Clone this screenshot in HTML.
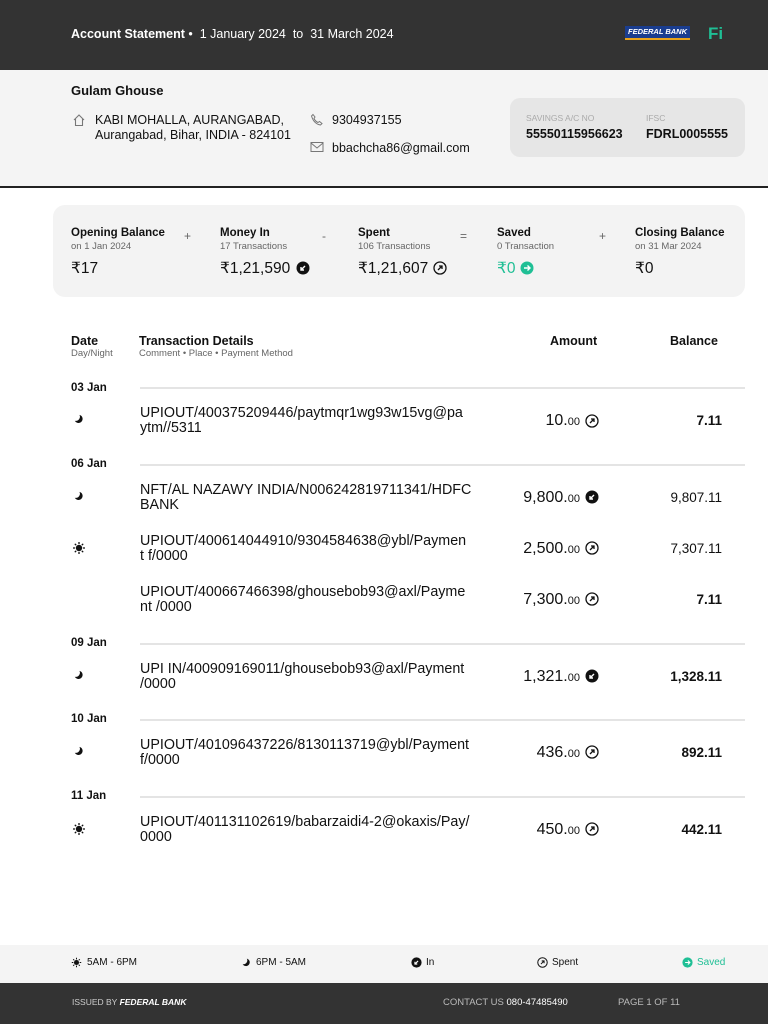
<!DOCTYPE html>
<html><head><meta charset="utf-8"><style>
*{margin:0;padding:0;box-sizing:border-box}
body{width:768px;height:1024px;position:relative;background:#fff;font-family:"Liberation Sans",sans-serif;color:#111;overflow:hidden}
.a{position:absolute;white-space:nowrap}
.b{font-weight:bold}
.s{font-size:10px;color:#666}
.tx{font-size:14.3px;line-height:15px;white-space:normal;width:360px}
.amt{font-size:16px;text-align:right;width:120px}
.amt small{font-size:11px}
.bal{font-size:13.5px;text-align:right;width:100px}
.hr{position:absolute;left:140px;width:605px;height:2px;background:#e4e4e4}
.dt{font-size:11.5px;font-weight:bold}
</style></head><body>
<svg width="0" height="0" style="position:absolute">
<defs>
<symbol id="sp" viewBox="0 0 14 14"><circle cx="7" cy="7" r="6" fill="none" stroke="#111" stroke-width="1.3"/><path d="M5 9L9 5M6 5H9V8" fill="none" stroke="#111" stroke-width="1.3"/></symbol>
<symbol id="in" viewBox="0 0 14 14"><circle cx="7" cy="7" r="6.5" fill="#111"/><path d="M9 5L5 9M5 6V9H8" fill="none" stroke="#fff" stroke-width="1.4"/></symbol>
<symbol id="sv" viewBox="0 0 14 14"><circle cx="7" cy="7" r="6.5" fill="#1fbf95"/><path d="M4 7H10M7.5 4.5L10 7L7.5 9.5" fill="none" stroke="#fff" stroke-width="1.4"/></symbol>
<symbol id="mn" viewBox="0 0 12 12"><path d="M7 2A4.5 4.5 0 1 1 2 8.5A4.5 4.5 0 0 0 7 2Z" fill="#111"/></symbol>
<symbol id="sn" viewBox="0 0 14 14"><circle cx="7" cy="7" r="3.2" fill="#111"/><path d="M7 1V3M7 11V13M1 7H3M11 7H13M2.8 2.8L4.2 4.2M9.8 9.8L11.2 11.2M2.8 11.2L4.2 9.8M9.8 4.2L11.2 2.8" stroke="#111" stroke-width="1.3"/></symbol>
</defs></svg>
<div class="a" style="left:0;top:0;width:768px;height:70px;background:#333"></div>
<div class="a" style="left:71px;top:27px;color:#fff;font-size:12.5px"><b>Account Statement</b> • &nbsp;1 January 2024 &nbsp;to &nbsp;31 March 2024</div>
<div class="a" style="left:625px;top:26px;width:65px;height:14px;background:#1a3d8f;border-bottom:2px solid #e8a21a;color:#fff;font-size:7.5px;font-style:italic;font-weight:bold;text-align:center;line-height:12px">FEDERAL BANK</div>
<div class="a" style="left:708px;top:24px;color:#1fbf95;font-size:17px;font-weight:bold">Fi</div>

<div class="a" style="left:0;top:70px;width:768px;height:117px;background:#f4f4f4"></div>
<div class="a" style="left:0;top:186px;width:768px;height:2px;background:#222"></div>
<div class="a b" style="left:71px;top:83px;font-size:13px">Gulam Ghouse</div>
<svg class="a" style="left:72px;top:113px" width="14" height="14" viewBox="0 0 14 14"><path d="M2 7L7 2L12 7M3.5 6V12.5H10.5V6" fill="none" stroke="#777" stroke-width="1.1"/></svg>
<div class="a" style="left:95px;top:113px;font-size:12.5px;line-height:15px">KABI MOHALLA, AURANGABAD,<br>Aurangabad, Bihar, INDIA - 824101</div>
<svg class="a" style="left:310px;top:113px" width="13" height="13" viewBox="0 0 13 13"><path d="M3 1.5L5 4L4 5.5Q5.5 8.5 8 9.5L9.5 8.5L12 10.5L10.5 12Q4 11 1.5 3Z" fill="none" stroke="#777" stroke-width="1"/></svg>
<div class="a" style="left:332px;top:113px;font-size:12.5px">9304937155</div>
<svg class="a" style="left:310px;top:141px" width="14" height="12" viewBox="0 0 14 12"><rect x="1" y="1.5" width="12" height="9" fill="none" stroke="#777"/><path d="M1 2L7 7L13 2" fill="none" stroke="#777"/></svg>
<div class="a" style="left:332px;top:141px;font-size:12.5px">bbachcha86@gmail.com</div>
<div class="a" style="left:510px;top:98px;width:235px;height:59px;background:#e6e6e6;border-radius:10px"></div>
<div class="a" style="left:526px;top:113px;font-size:8.5px;color:#aaa">SAVINGS A/C NO</div>
<div class="a b" style="left:526px;top:127px;font-size:12.5px">55550115956623</div>
<div class="a" style="left:646px;top:113px;font-size:8.5px;color:#aaa">IFSC</div>
<div class="a b" style="left:646px;top:127px;font-size:12.5px">FDRL0005555</div>

<div class="a" style="left:53px;top:205px;width:692px;height:92px;background:#f3f3f3;border-radius:12px"></div>
<div class="a b" style="left:71px;top:227px;font-size:11.5px">Opening Balance</div><div class="a s" style="left:71px;top:241px;font-size:9.5px">on 1 Jan 2024</div><div class="a" style="left:71px;top:259px;font-size:15.5px">₹17</div>
<div class="a" style="left:184px;top:229px;font-size:12px;color:#666">+</div>
<div class="a b" style="left:220px;top:227px;font-size:11.5px">Money In</div><div class="a s" style="left:220px;top:241px;font-size:9.5px">17 Transactions</div><div class="a" style="left:220px;top:259px;font-size:15.5px">₹1,21,590</div><svg class="a" style="left:296px;top:261px" width="14" height="14"><use href="#in"/></svg>
<div class="a" style="left:322px;top:229px;font-size:12px;color:#666">-</div>
<div class="a b" style="left:358px;top:227px;font-size:11.5px">Spent</div><div class="a s" style="left:358px;top:241px;font-size:9.5px">106 Transactions</div><div class="a" style="left:358px;top:259px;font-size:15.5px">₹1,21,607</div><svg class="a" style="left:433px;top:261px" width="14" height="14"><use href="#sp"/></svg>
<div class="a" style="left:460px;top:229px;font-size:12px;color:#666">=</div>
<div class="a b" style="left:497px;top:227px;font-size:11.5px">Saved</div><div class="a s" style="left:497px;top:241px;font-size:9.5px">0 Transaction</div><div class="a" style="left:497px;top:259px;font-size:15.5px;color:#1fbf95">₹0</div><svg class="a" style="left:520px;top:261px" width="14" height="14"><use href="#sv"/></svg>
<div class="a" style="left:599px;top:229px;font-size:12px;color:#666">+</div>
<div class="a b" style="left:635px;top:227px;font-size:11.5px">Closing Balance</div><div class="a s" style="left:635px;top:241px;font-size:9.5px">on 31 Mar 2024</div><div class="a" style="left:635px;top:259px;font-size:15.5px">₹0</div>

<div class="a b" style="left:71px;top:334px;font-size:12.5px">Date</div><div class="a s" style="left:71px;top:348px;font-size:9.5px">Day/Night</div>
<div class="a b" style="left:139px;top:334px;font-size:12.5px">Transaction Details</div><div class="a s" style="left:139px;top:348px;font-size:9.5px">Comment • Place • Payment Method</div>
<div class="a b" style="left:550px;top:334px;font-size:12.5px">Amount</div>
<div class="a b" style="left:670px;top:334px;font-size:12.5px">Balance</div>

<div class="a dt" style="left:71px;top:382px">03 Jan</div><div class="hr" style="top:387px"></div>
<div class="a dt" style="left:71px;top:458px">06 Jan</div><div class="hr" style="top:464px"></div>
<div class="a dt" style="left:71px;top:637px">09 Jan</div><div class="hr" style="top:643px"></div>
<div class="a dt" style="left:71px;top:713px">10 Jan</div><div class="hr" style="top:719px"></div>
<div class="a dt" style="left:71px;top:790px">11 Jan</div><div class="hr" style="top:796px"></div>

<svg class="a" style="left:73px;top:413px" width="11" height="11"><use href="#mn"/></svg>
<div class="a tx" style="left:140px;top:406px">UPIOUT/400375209446/paytmqr1wg93w15vg@pa<br>ytm//5311</div>
<div class="a amt" style="left:460px;top:412px">10.<small>00</small></div><svg class="a" style="left:585px;top:414px" width="14" height="14"><use href="#sp"/></svg>
<div class="a bal b" style="left:622px;top:413px">7.11</div>

<svg class="a" style="left:73px;top:490px" width="11" height="11"><use href="#mn"/></svg>
<div class="a tx" style="left:140px;top:483px">NFT/AL NAZAWY INDIA/N006242819711341/HDFC<br>BANK</div>
<div class="a amt" style="left:460px;top:489px">9,800.<small>00</small></div><svg class="a" style="left:585px;top:490px" width="14" height="14"><use href="#in"/></svg>
<div class="a bal" style="left:622px;top:490px">9,807.11</div>

<svg class="a" style="left:72px;top:541px" width="14" height="14"><use href="#sn"/></svg>
<div class="a tx" style="left:140px;top:534px">UPIOUT/400614044910/9304584638@ybl/Paymen<br>t f/0000</div>
<div class="a amt" style="left:460px;top:540px">2,500.<small>00</small></div><svg class="a" style="left:585px;top:541px" width="14" height="14"><use href="#sp"/></svg>
<div class="a bal" style="left:622px;top:541px">7,307.11</div>

<div class="a tx" style="left:140px;top:585px">UPIOUT/400667466398/ghousebob93@axl/Payme<br>nt /0000</div>
<div class="a amt" style="left:460px;top:591px">7,300.<small>00</small></div><svg class="a" style="left:585px;top:592px" width="14" height="14"><use href="#sp"/></svg>
<div class="a bal b" style="left:622px;top:592px">7.11</div>

<svg class="a" style="left:73px;top:669px" width="11" height="11"><use href="#mn"/></svg>
<div class="a tx" style="left:140px;top:662px">UPI IN/400909169011/ghousebob93@axl/Payment<br>/0000</div>
<div class="a amt" style="left:460px;top:668px">1,321.<small>00</small></div><svg class="a" style="left:585px;top:669px" width="14" height="14"><use href="#in"/></svg>
<div class="a bal b" style="left:622px;top:669px">1,328.11</div>

<svg class="a" style="left:73px;top:745px" width="11" height="11"><use href="#mn"/></svg>
<div class="a tx" style="left:140px;top:738px">UPIOUT/401096437226/8130113719@ybl/Payment<br>f/0000</div>
<div class="a amt" style="left:460px;top:744px">436.<small>00</small></div><svg class="a" style="left:585px;top:745px" width="14" height="14"><use href="#sp"/></svg>
<div class="a bal b" style="left:622px;top:745px">892.11</div>

<svg class="a" style="left:72px;top:822px" width="14" height="14"><use href="#sn"/></svg>
<div class="a tx" style="left:140px;top:815px">UPIOUT/401131102619/babarzaidi4-2@okaxis/Pay/<br>0000</div>
<div class="a amt" style="left:460px;top:821px">450.<small>00</small></div><svg class="a" style="left:585px;top:822px" width="14" height="14"><use href="#sp"/></svg>
<div class="a bal b" style="left:622px;top:822px">442.11</div>

<div class="a" style="left:0;top:945px;width:768px;height:38px;background:#f4f4f4"></div>
<svg class="a" style="left:71px;top:957px" width="11" height="11"><use href="#sn"/></svg><div class="a" style="left:87px;top:957px;font-size:10px">5AM - 6PM</div>
<svg class="a" style="left:241px;top:957px" width="10" height="10"><use href="#mn"/></svg><div class="a" style="left:256px;top:957px;font-size:10px">6PM - 5AM</div>
<svg class="a" style="left:411px;top:957px" width="11" height="11"><use href="#in"/></svg><div class="a" style="left:426px;top:957px;font-size:10px">In</div>
<svg class="a" style="left:537px;top:957px" width="11" height="11"><use href="#sp"/></svg><div class="a" style="left:552px;top:957px;font-size:10px">Spent</div>
<svg class="a" style="left:682px;top:957px" width="11" height="11"><use href="#sv"/></svg><div class="a" style="left:697px;top:957px;font-size:10px;color:#1fbf95">Saved</div>

<div class="a" style="left:0;top:983px;width:768px;height:41px;background:#333"></div>
<div class="a" style="left:72px;top:997px;font-size:8.5px;color:#ccc">ISSUED BY <b style="color:#fff;font-style:italic">FEDERAL BANK</b></div>
<div class="a" style="left:443px;top:997px;font-size:9.5px;color:#bbb">CONTACT US <span style="color:#fff">080-47485490</span></div>
<div class="a" style="left:618px;top:997px;font-size:9.5px;color:#bbb">PAGE 1 OF 11</div>
</body></html>
